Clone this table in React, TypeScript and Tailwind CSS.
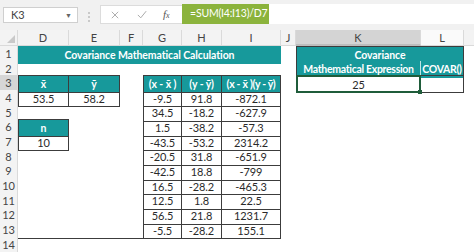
import React from 'react';

const cols = 'grid grid-cols-[18px_51px_51px_23px_39px_40px_59px_15px_125px_43px_1fr]';
const rowH = 'h-[14.66px]';

const teal = 'bg-[#17999b] text-white font-bold text-[10.5px]';
const box = 'border-[#3c3c3c]';

const data: [string, string, string][] = [
  ['-9.5', '91.8', '-872.1'],
  ['34.5', '-18.2', '-627.9'],
  ['1.5', '-38.2', '-57.3'],
  ['-43.5', '-53.2', '2314.2'],
  ['-20.5', '31.8', '-651.9'],
  ['-42.5', '18.8', '-799'],
  ['16.5', '-28.2', '-465.3'],
  ['12.5', '1.8', '22.5'],
  ['56.5', '21.8', '1231.7'],
  ['-5.5', '-28.2', '155.1'],
];

function RowNum({ n, active }: { n: number; active?: boolean }) {
  return (
    <div
      className={`flex items-center justify-center border-r border-b border-[#dadada] text-[11px] text-[#444] ${
        active ? 'bg-[#d6d6d6]' : 'bg-[#f3f3f3]'
      }`}
    >
      {n}
    </div>
  );
}

function C({ className = '', children }: { className?: string; children?: React.ReactNode }) {
  return (
    <div className={`flex items-center justify-center overflow-visible whitespace-nowrap leading-none ${className}`}>
      {children}
    </div>
  );
}

function FormulaBar() {
  return (
    <div className="flex h-[30px] items-start bg-[#f1f1f1] pt-[4px] text-[#444]">
      <div className="ml-[3px] mt-[3px] flex h-[16px] w-[75px] items-center justify-between border border-[#cfcfcf] bg-white pl-[7px] pr-[5px] text-[11px]">
        <span>K3</span>
        <span className="text-[7px] text-[#666]">▼</span>
      </div>
      <div className="flex w-[22px] flex-col items-center gap-[2px] pt-[8px]">
        <span className="h-[2px] w-[2px] rounded-full bg-[#bbb]" />
        <span className="h-[2px] w-[2px] rounded-full bg-[#bbb]" />
        <span className="h-[2px] w-[2px] rounded-full bg-[#bbb]" />
      </div>
      <div className="mt-[1px] flex h-[19px] w-[82px] items-center border border-r-0 border-[#dcdcdc] bg-white text-[#aaa]">
        <svg className="ml-[10px] h-[8px] w-[8px]" viewBox="0 0 10 10" fill="none" stroke="currentColor" strokeWidth="1.2">
          <path d="M1 1l8 8M9 1l-8 8" />
        </svg>
        <svg className="ml-[18px] h-[9px] w-[10px]" viewBox="0 0 12 10" fill="none" stroke="currentColor" strokeWidth="1.2">
          <path d="M1 5.5l3.5 3.5L11 1" />
        </svg>
        <span className="ml-[16px] font-['Liberation_Serif',serif] text-[11px] italic text-[#555]">
          f<span className="text-[8px]">x</span>
        </span>
      </div>
      <div className="flex h-[20px] flex-1 items-stretch bg-white">
        <div className="flex w-[87px] items-center whitespace-nowrap bg-[#8bb33c] pl-[8px] text-[10.5px] tracking-[-0.2px] text-white">
          =SUM(I4:I13)/D7
        </div>
      </div>
    </div>
  );
}

function Headers() {
  const letters = ['D', 'E', 'F', 'G', 'H', 'I', 'J'];
  return (
    <div className={`${cols} h-[16px] bg-[#f3f3f3] text-[11px] text-[#444]`}>
      <div className="flex items-end justify-end border-r border-b border-[#dadada] p-[2px]">
        <svg className="h-[8px] w-[8px]" viewBox="0 0 8 8">
          <path d="M8 0V8H0Z" fill="#c9c9c9" />
        </svg>
      </div>
      {letters.map((l) => (
        <C key={l} className="border-r border-b border-[#dadada]">
          {l}
        </C>
      ))}
      <C className="border-r border-b-2 border-[#dadada] border-b-[#bdbdbd] bg-[#d4d4d4]">K</C>
      <C className="border-r border-b border-[#dadada] bg-[#fafafa]">L</C>
      <div className="border-b border-[#dadada]" />
    </div>
  );
}

export default function App() {
  return (
    <div className="h-[252px] w-[474px] overflow-hidden bg-white font-['Lato',sans-serif]">
      <FormulaBar />
      <Headers />

      <div className="text-[11px] tracking-[-0.1px] text-[#2a2a2a]">
        {/* row 1 */}
        <div className={`${cols} ${rowH}`}>
          <RowNum n={1} />
          <C className={`col-span-6 ${teal}`}>Covariance Mathematical Calculation</C>
          <div />
          <C className={`col-span-2 border-x border-t ${box} ${teal}`}>Covariance</C>
          <div />
        </div>

        {/* row 2 */}
        <div className={`${cols} ${rowH}`}>
          <RowNum n={2} />
          <div className="col-span-7" />
          <C className={`border-l border-r border-r-[#bfe3e3] ${box} ${teal} tracking-[-0.3px]`}>
            Mathematical Expression
          </C>
          <C className={`border-r ${box} ${teal} tracking-[-0.3px]`}>COVAR()</C>
          <div />
        </div>

        {/* row 3 */}
        <div className={`${cols} ${rowH}`}>
          <RowNum n={3} active />
          <C className={`border ${box} ${teal}`}>x̄</C>
          <C className={`border-y border-r ${box} ${teal}`}>ȳ</C>
          <div />
          <C className={`border ${box} ${teal}`}>(x - x̄ )</C>
          <C className={`border-y border-r ${box} ${teal}`}>(y - ȳ)</C>
          <C className={`border-y border-r ${box} ${teal} tracking-[-0.3px]`}>(x - x̄ )(y - ȳ)</C>
          <div />
          <C className="relative border-2 border-[#1f5c3a] bg-white">
            25
            <span className="absolute -right-[3px] -bottom-[3px] h-[4px] w-[4px] bg-[#1f5c3a]" />
          </C>
          <C className={`border-y border-r ${box}`} />
          <div />
        </div>

        {/* rows 4 - 13 */}
        {data.map(([g, h, i], idx) => {
          const r = idx + 4;
          return (
            <div key={r} className={`${cols} ${rowH}`}>
              <RowNum n={r} />
              {r === 4 ? (
                <>
                  <C className={`border-x border-b ${box}`}>53.5</C>
                  <C className={`border-r border-b ${box}`}>58.2</C>
                </>
              ) : r === 6 ? (
                <>
                  <C className={`border ${box} ${teal}`}>n</C>
                  <div />
                </>
              ) : r === 7 ? (
                <>
                  <C className={`border-x border-b ${box}`}>10</C>
                  <div />
                </>
              ) : r === 13 ? (
                <div className={`col-span-2 border-b ${box}`} />
              ) : (
                <div className="col-span-2" />
              )}
              <div className={r === 13 ? `border-b ${box}` : ''} />
              <C className={`border-x border-b ${box}`}>{g}</C>
              <C className={`border-r border-b ${box}`}>{h}</C>
              <C className={`border-r border-b ${box}`}>{i}</C>
              <div className="col-span-4" />
            </div>
          );
        })}

        {/* row 14 */}
        <div className={`${cols} ${rowH}`}>
          <RowNum n={14} />
          <div className="col-span-10" />
        </div>
      </div>
    </div>
  );
}
